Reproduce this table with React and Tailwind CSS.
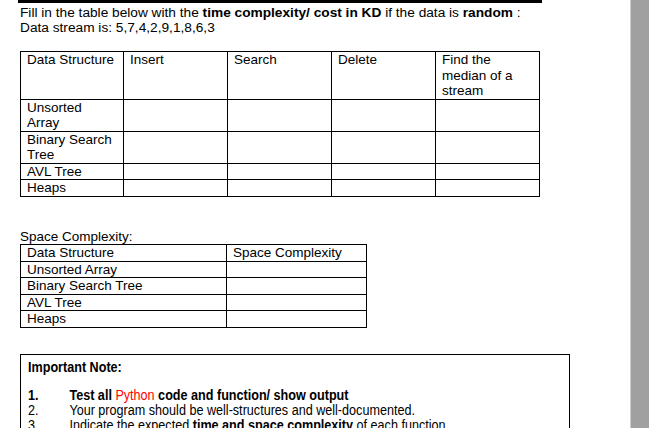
import React from 'react';

const timeRows = [
  { name: ['Unsorted', 'Array'] },
  { name: ['Binary Search', 'Tree'] },
  { name: ['AVL Tree'] },
  { name: ['Heaps'] },
];

const spaceRows = ['Data Structure', 'Unsorted Array', 'Binary Search Tree', 'AVL Tree', 'Heaps'];

const cell = 'border border-black align-top px-[6px] py-0';

const App = () => {
  return (
    <div className="flex h-[428px] w-[649px] overflow-hidden bg-white text-black font-['Liberation_Sans',Arial,sans-serif]">
      <div className="flex-1">
        <div className="ml-[18px] w-[524px] h-[3px] bg-black" />

        <div className="ml-[20px] mt-[2px] text-[13.7px] leading-[15px]">
          <p>
            Fill in the table below with the <b>time complexity/ cost in KD</b> if the data is <b>random</b> :
          </p>
          <p>Data stream is: 5,7,4,2,9,1,8,6,3</p>
        </div>

        {/* time complexity table */}
        <table className="ml-[20px] mt-[16px] w-[520px] table-fixed border-collapse text-[13.5px] leading-[15.5px]">
          <colgroup>
            <col className="w-[103px]" />
            <col className="w-[104px]" />
            <col className="w-[104px]" />
            <col className="w-[104px]" />
            <col className="w-[104px]" />
          </colgroup>
          <tbody>
            <tr>
              <td className={cell}>Data Structure</td>
              <td className={cell}>Insert</td>
              <td className={cell}>Search</td>
              <td className={cell}>Delete</td>
              <td className={cell}>
                Find the
                <br />
                median of a
                <br />
                stream
              </td>
            </tr>
            {timeRows.map((row, i) => (
              <tr key={i}>
                <td className={cell}>
                  {row.name.map((l, j) => (
                    <div key={j}>{l}</div>
                  ))}
                </td>
                <td className={cell} />
                <td className={cell} />
                <td className={cell} />
                <td className={cell} />
              </tr>
            ))}
          </tbody>
        </table>

        <p className="ml-[20px] mt-[32px] text-[13.5px] leading-[15.5px]">Space Complexity:</p>
        <table className="ml-[20px] w-[346px] table-fixed border-collapse text-[13.5px] leading-[15.5px]">
          <colgroup>
            <col className="w-[206px]" />
            <col className="w-[140px]" />
          </colgroup>
          <tbody>
            {spaceRows.map((name, i) => (
              <tr key={i}>
                <td className={cell}>{name}</td>
                <td className={cell}>{i === 0 ? 'Space Complexity' : ''}</td>
              </tr>
            ))}
          </tbody>
        </table>

        {/* note box */}
        <div className="ml-[20px] mt-[26px] w-[550px] h-[120px] border border-black border-b-0 pt-[5px] pl-[7px] text-[14px] leading-[15px]">
          <div className="origin-left scale-x-[0.9] w-[600px]">
            <p className="font-bold">Important Note:</p>
            <div className="mt-[13px]">
              <div className="flex">
                <span className="w-[46px] font-bold">1.</span>
                <span className="font-bold">
                  Test all <span className="text-[#ff0000] font-normal">Python</span> code and function/ show output
                </span>
              </div>
              <div className="flex">
                <span className="w-[46px]">2.</span>
                <span>Your program should be well-structures and well-documented.</span>
              </div>
              <div className="flex">
                <span className="w-[46px]">3.</span>
                <span>
                  Indicate the expected <b>time and space complexity</b> of each function
                </span>
              </div>
            </div>
          </div>
        </div>
      </div>

      <div className="w-[19px] h-full bg-[#a0a0a0] border-l border-[#cdcdcd]" />
    </div>
  );
};

export default App;
